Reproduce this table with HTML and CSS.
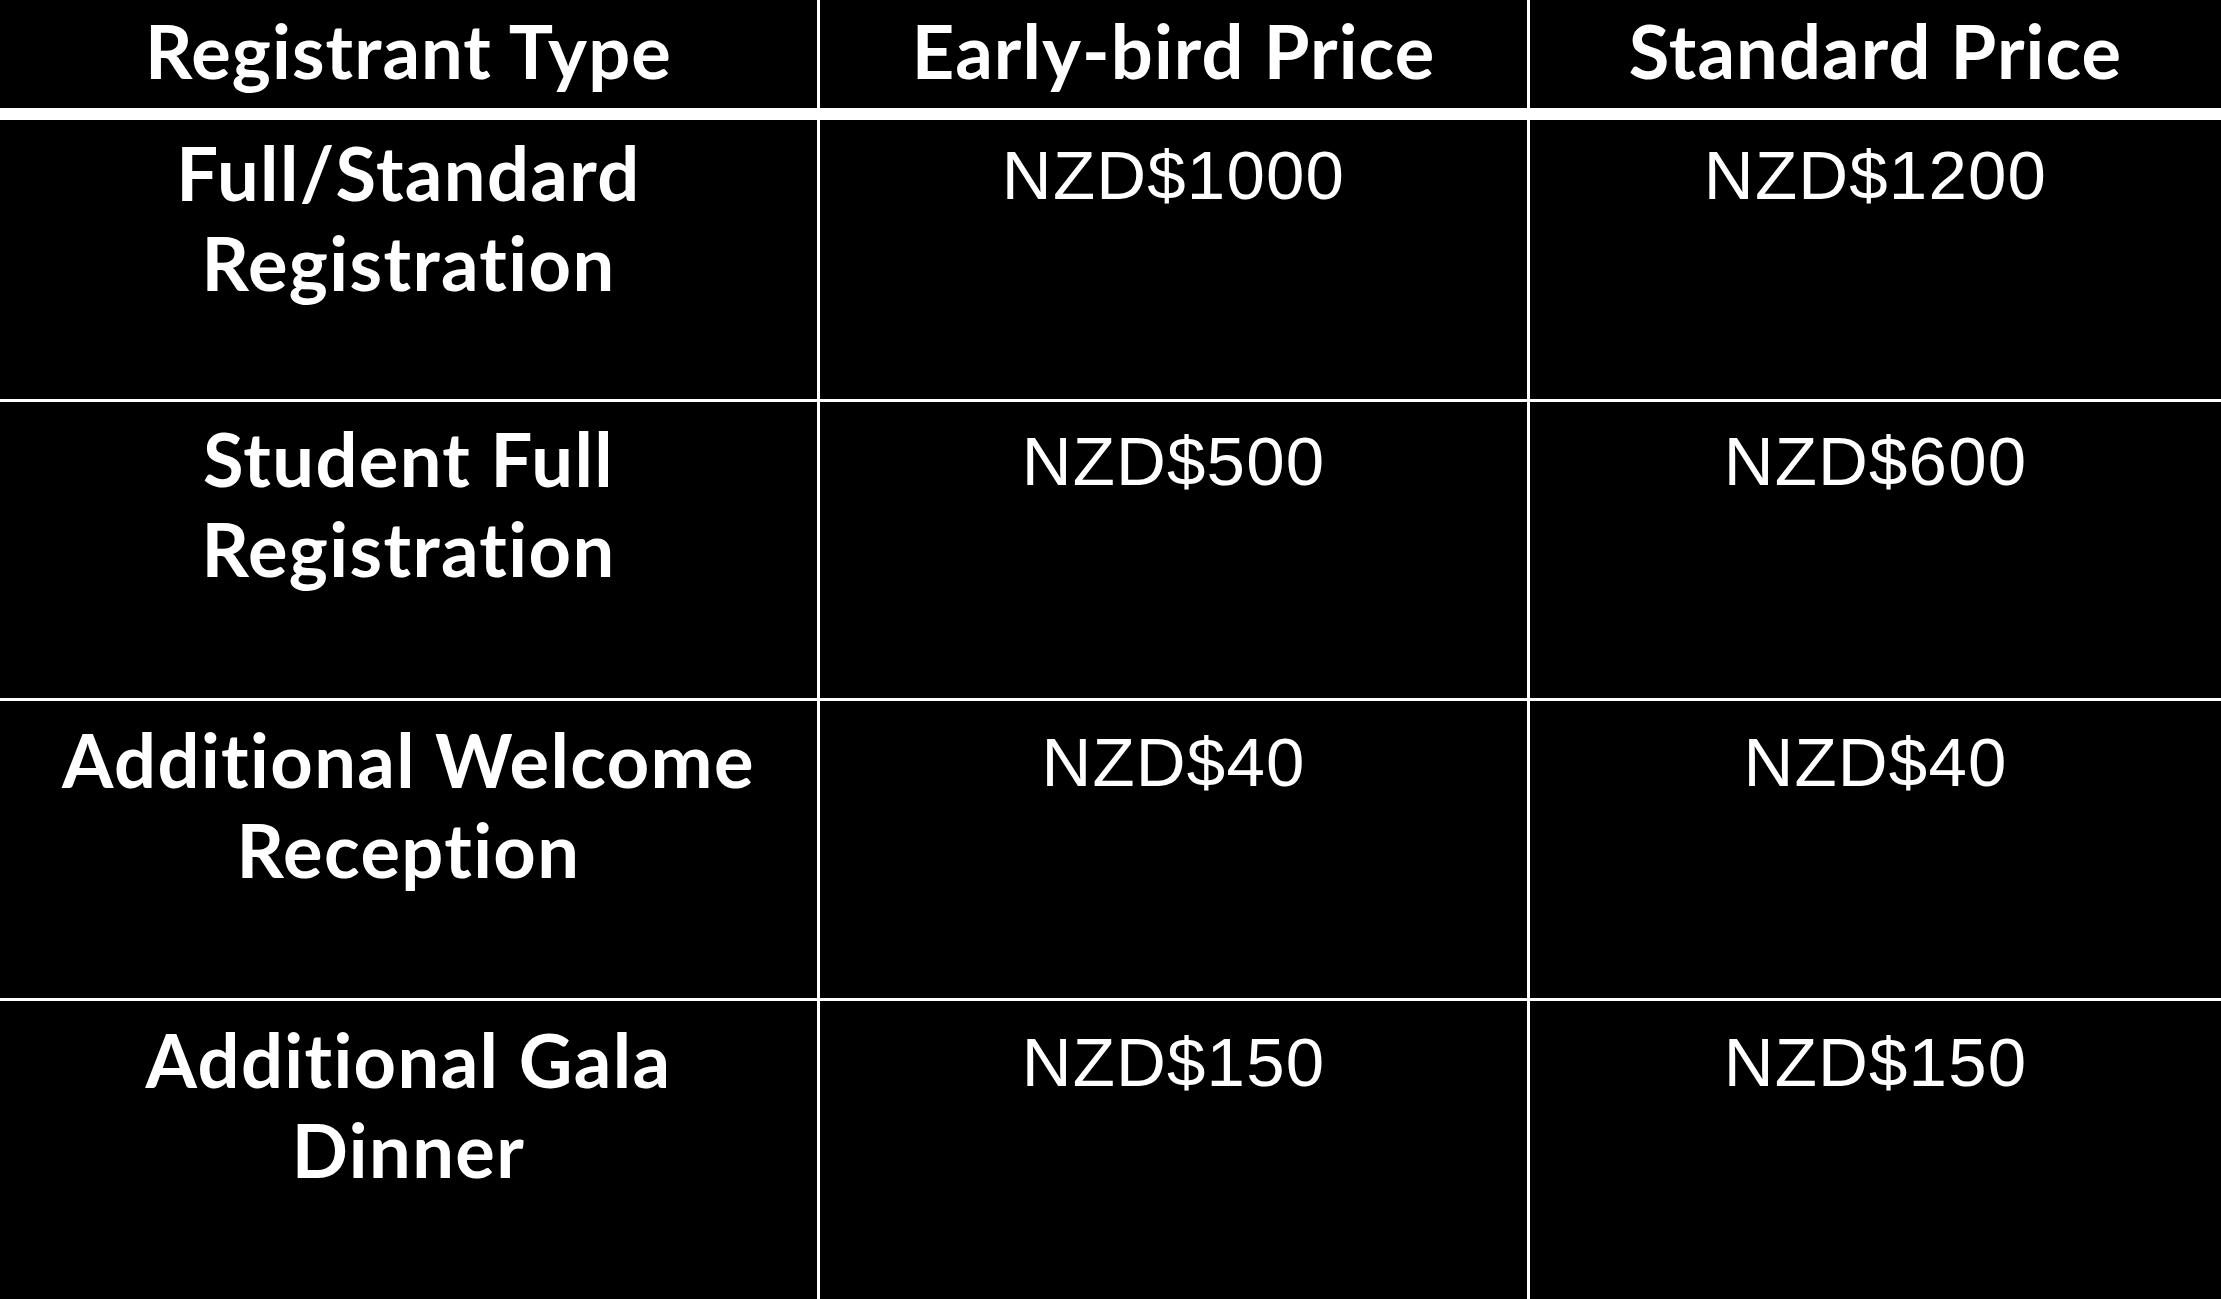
FILE: index.html
```html
<!DOCTYPE html>
<html lang="en">
<head>
<meta charset="utf-8">
<title>Registration Prices</title>
<link rel="stylesheet" href="styles.css">
</head>
<body>
<div class="price-table">
  <div class="row row-head">
    <div class="cell head">Registrant Type</div>
    <div class="cell head">Early-bird Price</div>
    <div class="cell head">Standard Price</div>
  </div>

  <div class="row row-1">
    <div class="cell type">Full/Standard<br>Registration</div>
    <div class="cell price">NZD$1000</div>
    <div class="cell price">NZD$1200</div>
  </div>

  <div class="row row-2">
    <div class="cell type">Student Full<br>Registration</div>
    <div class="cell price">NZD$500</div>
    <div class="cell price">NZD$600</div>
  </div>

  <div class="row row-3">
    <div class="cell type">Additional Welcome<br>Reception</div>
    <div class="cell price">NZD$40</div>
    <div class="cell price">NZD$40</div>
  </div>

  <div class="row row-4">
    <div class="cell type">Additional Gala<br>Dinner</div>
    <div class="cell price">NZD$150</div>
    <div class="cell price">NZD$150</div>
  </div>
</div>
</body>
</html>
```

FILE: styles.css
```css
html, body {
  margin: 0;
  padding: 0;
  background: #000;
}

.price-table {
  display: grid;
  grid-template-columns: 817px 707px 1fr;
  grid-template-rows: 117px 279px 296px 297px 1fr;
  column-gap: 3px;
  row-gap: 3px;
  height: 100vh;
  background: #fff;
}

.row {
  display: contents;
}

.row-1 { --shift: 0px; }
.row-2 { --shift: 4px; }
.row-3 { --shift: 6px; }
.row-4 { --shift: 6px; }

.cell {
  background: #000;
  color: #fff;
  text-align: center;
  line-height: 90px;
  font-variant-ligatures: none;
  font-feature-settings: "liga" 0;
}

.head {
  font-family: "Lato", "Liberation Sans", sans-serif;
  font-weight: 700;
  font-size: 74px;
  letter-spacing: 1.1px;
  padding-top: 6px;
  border-bottom: 9px solid #fff;
  white-space: nowrap;
}

.type {
  font-family: "Lato", "Liberation Sans", sans-serif;
  font-weight: 700;
  font-size: 74px;
  letter-spacing: 1.4px;
  padding-top: calc(8px + var(--shift, 0px));
}

.price {
  font-family: "Liberation Sans", Arial, sans-serif;
  font-weight: 400;
  font-size: 69px;
  letter-spacing: 1.2px;
  padding-top: calc(11px + var(--shift, 0px));
}
```
